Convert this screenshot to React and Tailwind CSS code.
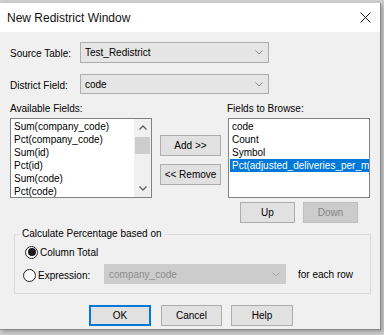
import React from "react";

const font = { fontFamily: '"Liberation Sans", Arial, sans-serif' };

const Chevron = ({ up, color = "#8a8a8a", w = 8, h = 5, sw = 1 }) => (
  <svg width={w} height={h} viewBox="0 0 8 5" className="shrink-0">
    <path
      d={up ? "M0.5 4.5 L4 1 L7.5 4.5" : "M0.5 0.5 L4 4 L7.5 0.5"}
      fill="none"
      stroke={color}
      strokeWidth={sw}
    />
  </svg>
);

const Combo = ({ value, className = "", disabled }) => (
  <div
    className={`flex items-center justify-between border pl-[4px] pr-[5px] ${
      disabled
        ? "bg-[#cccccc] border-[#cccccc] text-[#8d8d8d]"
        : "bg-[#e5e5e5] border-[#adadad] text-black"
    } ${className}`}
  >
    <span>{value}</span>
    <Chevron color={disabled ? "#a8a8a8" : "#8a8a8a"} />
  </div>
);

const Btn = ({ children, className = "", disabled, primary }) => (
  <div
    className={`flex items-center justify-center h-[21px] ${
      primary
        ? "border-2 border-[#0078d7] bg-[#e1e1e1]"
        : disabled
        ? "border border-[#bfbfbf] bg-[#cccccc] text-[#838383]"
        : "border border-[#adadad] bg-[#e1e1e1]"
    } ${className}`}
  >
    {children}
  </div>
);

const Radio = ({ checked, className = "" }) => (
  <div
    className={`w-[13px] h-[13px] rounded-full border border-[#222] bg-white flex items-center justify-center shrink-0 ${className}`}
  >
    {checked && <div className="w-[8px] h-[8px] rounded-full bg-[#1a1a1a]" />}
  </div>
);

const available = [
  "Sum(company_code)",
  "Pct(company_code)",
  "Sum(id)",
  "Pct(id)",
  "Sum(code)",
  "Pct(code)",
];

const browse = ["code", "Count", "Symbol", "Pct(adjusted_deliveries_per_m"];

export default function App() {
  return (
    <div
      className="w-[384px] h-[335px] bg-[#cfcfcf] overflow-hidden pt-[3px] text-[10px] text-black"
      style={font}
    >
      <div className="w-[381px] h-[327px] bg-[#f0f0f0] border-r border-b border-[#8a8a8a] shadow-[2px_2px_4px_rgba(0,0,0,0.25)] flex flex-col">
        {/* Title bar */}
        <div className="h-[29px] bg-white flex items-center justify-between pl-[7px] pr-[9px] shrink-0">
          <span className="text-[12px] text-[#111]">New Redistrict Window</span>
          <svg width="11" height="11" viewBox="0 0 11 11">
            <path d="M0.5 0.5 L10.5 10.5 M10.5 0.5 L0.5 10.5" stroke="#111" strokeWidth="1" />
          </svg>
        </div>

        {/* Source / district */}
        <div className="flex items-center h-[21px] mt-[10px] pl-[10px]">
          <span className="w-[70px] pt-[2px]">Source Table:</span>
          <Combo value="Test_Redistrict" className="w-[189px] h-[21px]" />
        </div>
        <div className="flex items-center h-[20px] mt-[11px] pl-[10px]">
          <span className="w-[70px] pt-[2px]">District Field:</span>
          <Combo value="code" className="w-[189px] h-[20px]" />
        </div>

        {/* Labels */}
        <div className="flex h-[14px] mt-[8px] leading-[14px]">
          <span className="ml-[10px] w-[217px]">Available Fields:</span>
          <span>Fields to Browse:</span>
        </div>

        {/* Lists */}
        <div className="flex mt-[2px] pl-[10px]">
          <div className="w-[142px] h-[80px] border border-[#828282] bg-white flex">
            <div className="flex-1 pt-[1px] pl-[3px] leading-[13px]">
              {available.map((t) => (
                <div key={t} className="h-[13px]">
                  {t}
                </div>
              ))}
            </div>
            <div className="w-[17px] bg-[#f0f0f0] flex flex-col items-center">
              <div className="h-[17px] flex items-center justify-center">
                <Chevron up color="#606060" sw={1.3} />
              </div>
              <div className="w-[15px] h-[17px] bg-[#cdcdcd] mt-[1px]" />
              <div className="flex-1" />
              <div className="h-[17px] flex items-center justify-center">
                <Chevron color="#606060" sw={1.3} />
              </div>
            </div>
          </div>

          <div className="ml-[8px] w-[61px] pt-[17px] flex flex-col">
            <Btn>Add &gt;&gt;</Btn>
            <Btn className="mt-[8px]">&lt;&lt; Remove</Btn>
          </div>

          <div className="ml-[7px] flex flex-col">
            <div className="w-[142px] h-[80px] border border-[#828282] bg-white pt-[1px] pl-[1px] leading-[13px] overflow-hidden">
              {browse.map((t, i) => (
                <div
                  key={t}
                  className={`h-[13px] pl-[2px] whitespace-nowrap ${
                    i === 3 ? "bg-[#0078d7] text-white" : ""
                  }`}
                >
                  {t}
                </div>
              ))}
            </div>
            <div className="flex mt-[4px] pl-[12px]">
              <Btn className="w-[55px]">Up</Btn>
              <Btn disabled className="w-[55px] ml-[8px]">
                Down
              </Btn>
            </div>
          </div>
        </div>

        {/* Group box */}
        <fieldset className="ml-[14px] mt-[5px] w-[357px] h-[66px] border border-[#dcdcdc]">
          <legend className="ml-[5px] px-[2px] leading-[12px]">Calculate Percentage based on</legend>
          <div className="flex items-center h-[14px] mt-[5px] ml-[10px]">
            <Radio checked />
            <span className="ml-[2px]">Column Total</span>
          </div>
          <div className="flex items-center h-[20px] mt-[5px] ml-[8px]">
            <Radio className="mt-[2px]" />
            <span className="ml-[2px] w-[66px] pt-[3px]">Expression:</span>
            <Combo disabled value="company_code" className="w-[182px] h-[20px]" />
            <span className="ml-[12px]">for each row</span>
          </div>
        </fieldset>

        {/* Bottom buttons */}
        <div className="flex mt-[11px] pl-[89px]">
          <Btn primary className="w-[62px]">OK</Btn>
          <Btn className="w-[61px] ml-[10px]">Cancel</Btn>
          <Btn className="w-[62px] ml-[9px]">Help</Btn>
        </div>
      </div>
    </div>
  );
}
